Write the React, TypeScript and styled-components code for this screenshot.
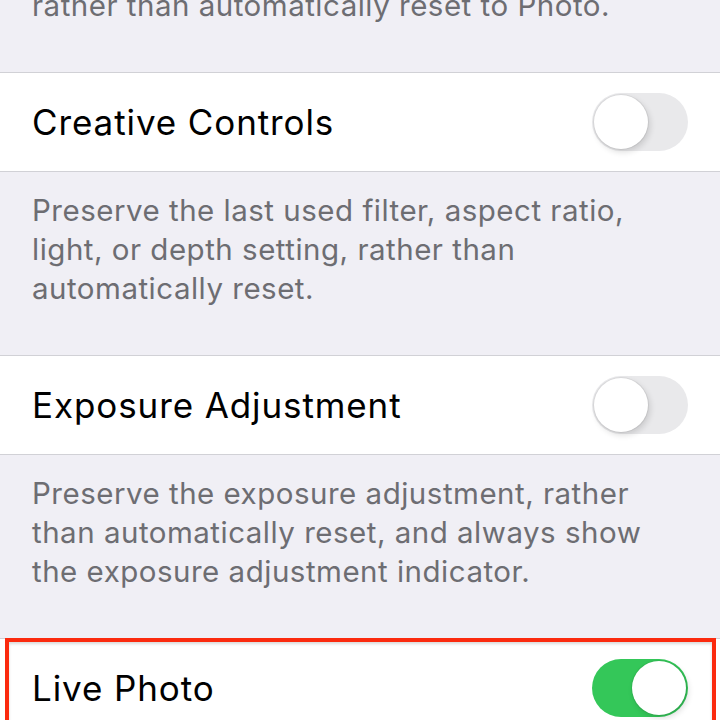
import styled, { createGlobalStyle, css } from 'styled-components';

const GlobalStyle = createGlobalStyle`
  html, body {
    margin: 0;
    padding: 0;
    background: #f0eff5;
    overflow: hidden;
  }
  body {
    font-family: 'Inter', 'Liberation Sans', sans-serif;
    -webkit-font-smoothing: antialiased;
  }
`;

const Screen = styled.div`
  width: 720px;
  height: 720px;
  overflow: hidden;
  background: #f0eff5;
`;

// the list is scrolled, so its top is cut off
const List = styled.div`
  margin-top: -14px;
  display: flex;
  flex-direction: column;
`;

const Note = styled.p<{ $first?: boolean }>`
  margin: 0;
  padding: ${(p) => (p.$first ? '0' : '19px')} 32px 47px;
  color: #6d6d72;
  font-size: 29.5px;
  line-height: 39px;
  letter-spacing: 0.5px;
`;

const Row = styled.div<{ $marked?: boolean }>`
  position: relative;
  box-sizing: border-box;
  height: 100px;
  display: flex;
  align-items: center;
  justify-content: space-between;
  padding: 0 32px;
  background: #fff;
  border-top: 1px solid #d1d1d6;
  border-bottom: 1px solid #d1d1d6;

  ${(p) =>
    p.$marked &&
    css`
      &::after {
        content: '';
        position: absolute;
        left: 5px;
        right: 4px;
        top: -1px;
        bottom: -40px;
        border: 4px solid #fb2a0e;
        box-shadow: inset 0 2px 3px rgba(0, 0, 0, 0.15);
      }
    `}
`;

const Label = styled.span`
  color: #000;
  font-size: 35px;
  letter-spacing: 0.9px;
`;

const Track = styled.div<{ $on?: boolean }>`
  position: relative;
  flex: none;
  width: 96px;
  height: 58px;
  border-radius: 29px;
  background: ${(p) => (p.$on ? '#34c759' : '#e9e9eb')};
`;

const Knob = styled.div<{ $on?: boolean }>`
  position: absolute;
  top: 2px;
  left: ${(p) => (p.$on ? '40px' : '2px')};
  width: 54px;
  height: 54px;
  border-radius: 50%;
  background: #fff;
  box-shadow: 0 0 0 1px rgba(0, 0, 0, 0.06), 2px 3px 6px rgba(0, 0, 0, 0.14);
`;

function Toggle({ on = false }: { on?: boolean }): React.ReactElement {
  return (
    <Track $on={on}>
      <Knob $on={on} />
    </Track>
  );
}

function SettingRow({
  label,
  on = false,
  marked = false,
}: {
  label: string;
  on?: boolean;
  marked?: boolean;
}): React.ReactElement {
  return (
    <Row $marked={marked}>
      <Label>{label}</Label>
      <Toggle on={on} />
    </Row>
  );
}

export default function App(): React.ReactElement {
  return (
    <Screen>
      <GlobalStyle />
      <List>
        <Note $first>rather than automatically reset to Photo.</Note>
        <SettingRow label="Creative Controls" />
        <Note>
          Preserve the last used filter, aspect ratio,
          <br />
          light, or depth setting, rather than
          <br />
          automatically reset.
        </Note>
        <SettingRow label="Exposure Adjustment" />
        <Note>
          Preserve the exposure adjustment, rather
          <br />
          than automatically reset, and always show
          <br />
          the exposure adjustment indicator.
        </Note>
        <SettingRow label="Live Photo" on marked />
      </List>
    </Screen>
  );
}
